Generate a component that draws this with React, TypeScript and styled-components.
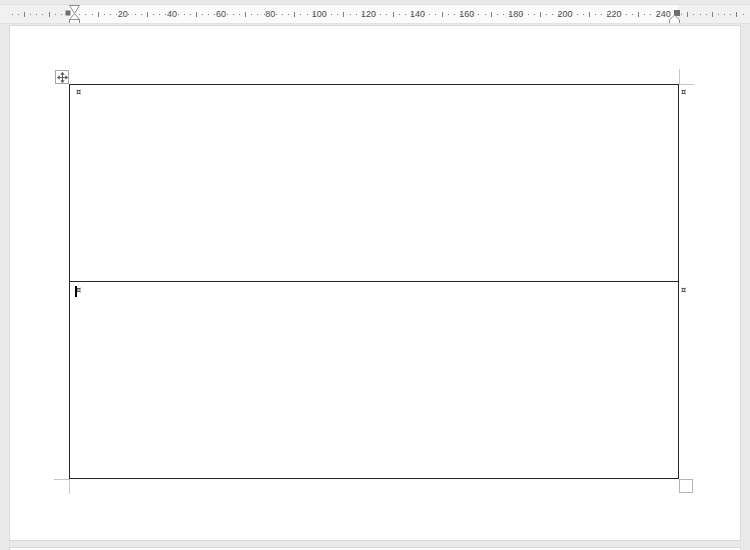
import React from "react";
import styled, { createGlobalStyle } from "styled-components";

const GlobalStyle = createGlobalStyle`
  html, body {
    margin: 0;
    padding: 0;
    background: #e9e9e9;
    font-family: "Liberation Sans", Arial, sans-serif;
  }
`;

const SLOT = 6.15;
const MARGIN_LEFT = 69;
const MARGIN_RIGHT = 678;

export const Screen = styled.div`
  width: 750px;
  height: 550px;
  overflow: hidden;
  background: #e9e9e9;
  display: flex;
  flex-direction: column;
`;

export const RulerBar = styled.div`
  position: relative;
  flex: 0 0 20px;
  margin-top: 4px;
  height: 20px;
  box-sizing: border-box;
  overflow: hidden;
  border-top: 1px solid #e2e2e2;
  border-bottom: 1px solid #e2e2e2;
  background: linear-gradient(
    to right,
    #f1f1f1 ${MARGIN_LEFT}px,
    #fbfbfb ${MARGIN_LEFT}px,
    #fbfbfb ${MARGIN_RIGHT}px,
    #f1f1f1 ${MARGIN_RIGHT}px
  );
`;

export const RulerTrack = styled.div`
  display: flex;
  height: 100%;
  margin-left: -${SLOT / 2}px;
`;

export const Slot = styled.div`
  flex: 0 0 ${SLOT}px;
  width: ${SLOT}px;
  min-width: 0;
  display: flex;
  align-items: center;
  justify-content: center;
  overflow: visible;
`;

export const Dot = styled.span`
  flex: 0 0 1px;
  width: 1px;
  height: 1px;
  background: #7e7e7e;
`;

export const Tick = styled.span`
  flex: 0 0 1px;
  width: 1px;
  height: 5px;
  background: #7e7e7e;
`;

export const Num = styled.span`
  flex: 0 0 auto;
  font-size: 9px;
  line-height: 9px;
  color: #4a4a4a;
  white-space: nowrap;
`;

export const Marker = styled.svg`
  position: absolute;
  top: 0;
  overflow: visible;
`;

export const Workspace = styled.div`
  flex: 0 0 auto;
  display: flex;
  flex-direction: column;
  gap: 8px;
  padding: 2px 0 0 10px;
`;

export const Page = styled.div<{ $stub?: boolean }>`
  position: relative;
  width: 730px;
  height: ${(p) => (p.$stub ? 20 : 514)}px;
  flex: 0 0 auto;
  box-sizing: border-box;
  background: #ffffff;
  box-shadow: 0 0 0 1px #d9d9d9;
  padding: 58px 0 0 59px;
`;

export const TableGrid = styled.div`
  display: grid;
  grid-template-columns: 610px 20px;
  font-size: 8px;
  line-height: 10px;
`;

export const Cell = styled.div<{ $first?: boolean }>`
  box-sizing: border-box;
  height: ${(p) => (p.$first ? 198 : 197)}px;
  border: 1px solid #262626;
  border-top: ${(p) => (p.$first ? "1px solid #262626" : "none")};
  padding: ${(p) => (p.$first ? 3 : 4)}px 0 0 6px;
`;

export const RowEnd = styled.div`
  padding: 4px 0 0 2px;
`;

export const EndMark = styled.span`
  position: relative;
  display: inline-block;
  vertical-align: top;
  font-family: "DejaVu Sans", sans-serif;
  font-size: 8px;
  line-height: 10px;
  color: #111;
`;

export const Caret = styled.span`
  position: absolute;
  left: -1px;
  top: 0;
  width: 2px;
  height: 11px;
  background: #000;
`;

export const MoveHandle = styled.div`
  position: absolute;
  left: 45px;
  top: 44px;
  width: 14px;
  height: 14px;
  box-sizing: border-box;
  border: 1px solid #a6a6a6;
  background: #fff;
  display: flex;
  align-items: center;
  justify-content: center;
`;

export const ResizeHandle = styled.div`
  position: absolute;
  left: 669px;
  top: 453px;
  width: 14px;
  height: 14px;
  box-sizing: border-box;
  border: 1px solid #b4b4b4;
  background: #fff;
`;

export const CropLine = styled.div<{ $vertical?: boolean }>`
  position: absolute;
  background: #c4c4c4;
  width: ${(p) => (p.$vertical ? "1px" : "15px")};
  height: ${(p) => (p.$vertical ? "15px" : "1px")};
`;

function rulerMark(i: number) {
  if (i <= -11) return null;
  if (i < 0) return i % 4 === 0 ? <Tick /> : <Dot />;
  if (i === 0 || i === 97 || i === 98) return null;
  if (i < 98) {
    if (i % 8 === 0) return <Num>{i * 2.5}</Num>;
    if (i % 8 === 4) return <Tick />;
    return <Dot />;
  }
  return (i - 100) % 4 === 0 ? <Tick /> : <Dot />;
}

const slots = Array.from({ length: 122 }, (_, k) => k - 12);

function Ruler() {
  return (
    <RulerBar>
      <RulerTrack>
        {slots.map((i) => (
          <Slot key={i}>{rulerMark(i)}</Slot>
        ))}
      </RulerTrack>
      {/* left indent: column marker + hourglass */}
      <Marker style={{ left: 64 }} width="17" height="22">
        <rect x="1.5" y="5.5" width="5" height="5" fill="#6e6e6e" />
        <polygon
          points="5.5,0.5 15.5,0.5 10.5,8.5"
          fill="#fff"
          stroke="#8c8c8c"
        />
        <polygon
          points="10.5,8.5 15.5,14.5 5.5,14.5"
          fill="#fff"
          stroke="#8c8c8c"
        />
        <rect x="5.5" y="14.5" width="10" height="6" fill="#fff" stroke="#8c8c8c" />
      </Marker>
      {/* right indent: column marker + house */}
      <Marker style={{ left: 668 }} width="14" height="22">
        <rect x="6" y="5" width="6" height="6" fill="#6e6e6e" />
        <polygon
          points="1.5,15 6.5,10 11.5,15 11.5,20.5 1.5,20.5"
          fill="#fff"
          stroke="#8c8c8c"
        />
      </Marker>
    </RulerBar>
  );
}

function MoveIcon() {
  return (
    <svg
      width="11"
      height="11"
      viewBox="0 0 24 24"
      fill="none"
      stroke="#5a5a5a"
      strokeWidth="2.4"
      strokeLinecap="round"
      strokeLinejoin="round"
    >
      <path d="M12 2v20" />
      <path d="m15 19-3 3-3-3" />
      <path d="m19 9 3 3-3 3" />
      <path d="M2 12h20" />
      <path d="m5 9-3 3 3 3" />
      <path d="m9 5 3-3 3 3" />
    </svg>
  );
}

function App() {
  return (
    <>
      <GlobalStyle />
      <Screen>
        <Ruler />
        <Workspace>
          <Page>
            <TableGrid>
              <Cell $first>
                <EndMark>¤</EndMark>
              </Cell>
              <RowEnd>
                <EndMark>¤</EndMark>
              </RowEnd>
              <Cell>
                <EndMark>
                  <Caret />¤
                </EndMark>
              </Cell>
              <RowEnd>
                <EndMark>¤</EndMark>
              </RowEnd>
            </TableGrid>

            <CropLine $vertical style={{ left: 669, top: 43 }} />
            <CropLine style={{ left: 669, top: 58 }} />
            <CropLine style={{ left: 44, top: 453 }} />
            <CropLine $vertical style={{ left: 59, top: 453 }} />

            <MoveHandle>
              <MoveIcon />
            </MoveHandle>
            <ResizeHandle />
          </Page>
          <Page $stub />
        </Workspace>
      </Screen>
    </>
  );
}

export default App;
